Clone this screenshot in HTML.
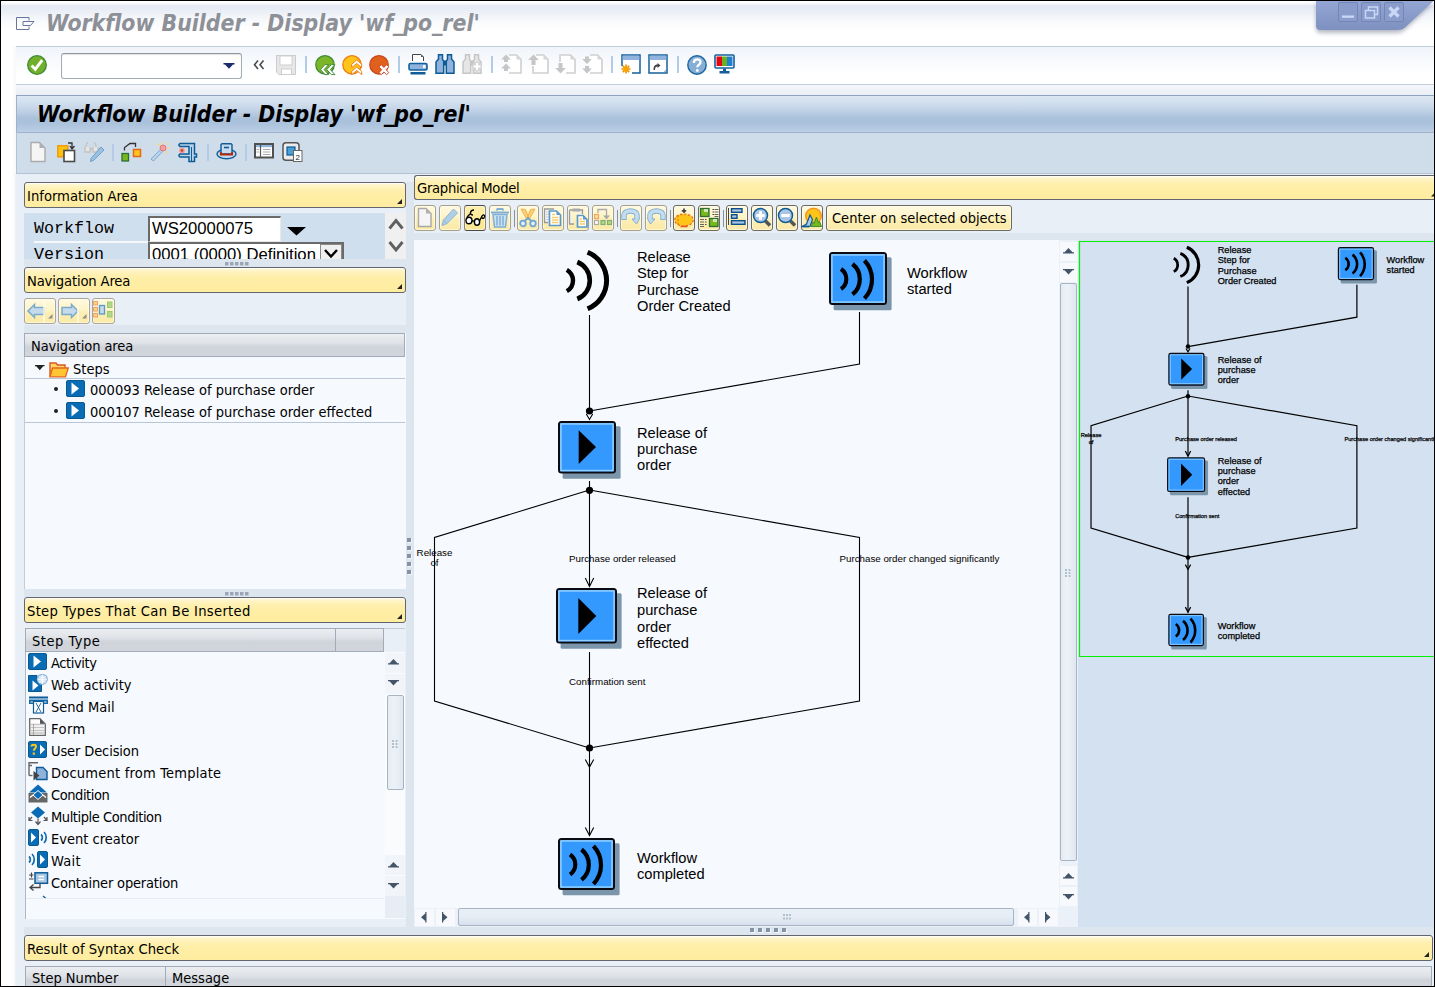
<!DOCTYPE html>
<html lang="en">
<head>
<meta charset="utf-8">
<title>Workflow Builder - Display 'wf_po_rel'</title>
<style>
*{box-sizing:border-box;margin:0;padding:0}
html,body{width:1435px;height:987px;overflow:hidden;background:#000}
body{position:relative;font-family:"DejaVu Sans Condensed","Liberation Sans",sans-serif;font-size:14.5px;color:#000}
.abs{position:absolute}
#win{position:absolute;left:0;top:0;width:1435px;height:987px;background:#e8eff7;overflow:hidden}
#frame{left:0;top:0;width:1435px;height:987px;border:1px solid #000;border-bottom-width:1px;z-index:99}
#win *{position:absolute}
svg{display:block;overflow:visible}
.t{white-space:nowrap;line-height:1}
/* title bar */
#tbar{left:1px;top:1px;width:1433px;height:45px;background:linear-gradient(#fff 0,#fbfcfe 2px,#e3e8f2 5px,#edf1f7 12px,#fafbfd 22px,#fff 30px,#fff 100%)}
#tbar .t{left:45px;top:9px;font:italic bold 22.8px "DejaVu Sans Condensed","Liberation Sans",sans-serif;color:#8d9097}
#leftcol{left:1px;top:46px;width:15px;height:940px;background:linear-gradient(90deg,#fff 0,#fff 70%,#f6f8fc 100%)}
.hline{height:1px;background:#c2cddb}
#stb{left:16px;top:47px;width:1418px;height:37px;background:linear-gradient(#f0f4fa,#f8fafd 40%,#fff 75%)}
#gap1{left:16px;top:85px;width:1418px;height:10px;background:linear-gradient(#f4f7fb,#eaeff6)}
#tpanel{left:16px;top:95px;width:1418px;height:37px;border-top:1px solid #8ea3bd;border-left:1px solid #9fb2c9;background:linear-gradient(#dce7f2 0,#cad9ea 30%,#aac1dc 62%,#abc2dc 75%,#bbcee4 100%)}
#tpanel .t{left:20px;top:5px;font:italic bold 22.8px "DejaVu Sans Condensed","Liberation Sans",sans-serif;color:#000}
#atb{left:16px;top:132px;width:1418px;height:42px;background:#cfdce9;border-left:1px solid #b4c3d4;border-bottom:1px solid #b4c3d4;border-top:1px solid #9fb4cc}
.sep{width:1px;height:17px;background:#a9c0dc}
/* yellow headers */
.dk{background:#dde6ef}
.yh{height:26px;border:1px solid #63666f;border-radius:3px;background:linear-gradient(#fff9e0 0,#fff4c4 3px,#fff0b0 7px,#feeea6 11px,#feec9f 100%);box-shadow:inset 0 1px 0 #fffdf2}
.yh .t{left:2px;top:6px;font-size:14.67px}
.yh i{position:absolute;right:3px;bottom:3px;width:0;height:0;border-left:5px solid transparent;border-bottom:5px solid #222}
.gh{border:1px solid #a2abb8;background:linear-gradient(#eceef1 0,#dfe2e7 40%,#cfd3da 60%,#d2d6dc 100%)}
.gh .t{top:5px}
.btn{height:26px;border:1px solid #a8a08a;border-radius:3px;background:linear-gradient(#fff9e0,#fef4c8 45%,#fcefb6 55%,#fbeaa6);box-shadow:inset 0 0 0 1px rgba(255,255,255,.5)}
</style>
</head>
<body>
<div id="win">
<div id="tbar"><div class="t">Workflow Builder - Display 'wf_po_rel'</div>
<svg style="left:15px;top:15px" width="20" height="16" viewBox="0 0 20 16"><path d="M13 4.5V1.5H0.5V13.500H13V10.500M7 5.500H18L14.500 9.500H7Z" fill="none" stroke="#66759a" stroke-width="1"/></svg>
</div>
<div id="leftcol"></div><div style="left:15px;top:174px;width:1px;height:812px;background:#ecf2f8"></div>
<div class="hline" style="left:16px;top:46px;width:1418px"></div>
<div id="stb"></div>
<div class="hline" style="left:16px;top:84px;width:1418px"></div>
<div id="gap1"></div>
<div id="tpanel"><div class="t">Workflow Builder - Display 'wf_po_rel'</div></div>
<div id="atb"></div>
<!-- standard toolbar -->
<svg style="left:27px;top:55px" width="20" height="20" viewBox="0 0 20 20"><circle cx="10" cy="10" r="9.3" fill="#72b02c" stroke="#3f8c34" stroke-width="1.3"/><path d="M4.600 10.500L8.300 14.200L15.200 5.200" fill="none" stroke="#fff" stroke-width="2.900"/></svg>
<div style="left:61px;top:53px;width:181px;height:26px;background:#fff;border:1px solid #a3abb6;border-top-color:#8f97a2;border-radius:3px;box-shadow:inset 0 1px 1px rgba(0,0,0,.12)"></div>
<svg style="left:223px;top:62px" width="12" height="8" viewBox="0 0 12 8"><path d="M0.500 1H11.500V2.500H10L6 6.700L2 2.500H0.500Z" fill="#1d2b6c"/></svg>
<svg style="left:253px;top:60px" width="12" height="10" viewBox="0 0 12 10"><path d="M5 0.500L1.500 4.700L5 9M10.500 0.500L7 4.700L10.500 9" fill="none" stroke="#444" stroke-width="1.500"/></svg>
<svg style="left:276px;top:55px" width="20" height="20" viewBox="0 0 20 20"><path d="M0.500 0.500H19.500V19.500H3L0.500 17Z" fill="#e7e7e7" stroke="#cbcbcb"/><rect x="4" y="1" width="12" height="9" fill="#fff" stroke="#cfcfcf"/><rect x="5.500" y="14" width="10" height="5.500" fill="#fff" stroke="#cfcfcf"/></svg>
<div class="sep" style="left:305px;top:56px;width:2px;background:#b4cbe8"></div>
<svg style="left:315px;top:55px" width="21" height="20" viewBox="0 0 21 20"><circle cx="10" cy="9.800" r="9.200" fill="#7ab628" stroke="#3f8c34" stroke-width="1.300"/><path d="M10.0 9.6L5.5 14.6L10.0 19.6H13.6L9.1 14.6L13.6 9.6ZM16.3 9.6L11.8 14.6L16.3 19.6H19.900000000000002L15.4 14.6L19.900000000000002 9.6Z" fill="#fff" stroke="#37822e" stroke-width="0.900"/></svg>
<svg style="left:342px;top:55px" width="21" height="20" viewBox="0 0 21 20"><circle cx="10" cy="9.800" r="9.200" fill="#fdc51a" stroke="#ee7d12" stroke-width="1.300"/><path d="M9.7 9.3L14.7 5L19.7 9.3V12.700000000000001L14.7 8.4L9.7 12.700000000000001ZM9.7 16.3L14.7 12L19.7 16.3V19.7L14.7 15.4L9.7 19.7Z" fill="#fff" stroke="#ee7410" stroke-width="0.900"/></svg>
<svg style="left:369px;top:55px" width="21" height="20" viewBox="0 0 21 20"><circle cx="10" cy="9.800" r="9.200" fill="#e0611d" stroke="#c9451c" stroke-width="1.300"/><path d="M10 11.800L12.200 9.700L14.900 12.400L17.600 9.700L19.800 11.800L17.100 14.700L19.800 17.600L17.600 19.700L14.900 17L12.200 19.700L10 17.600L12.700 14.700Z" fill="#fff" stroke="#c7401a" stroke-width="0.900"/></svg>
<div class="sep" style="left:398px;top:56px;width:2px;background:#b4cbe8"></div>
<svg style="left:408px;top:54px" width="20" height="21" viewBox="0 0 20 21"><path d="M4.500 7V0.500H13L15.500 3V7" fill="#fff" stroke="#444" stroke-width="1"/><path d="M13 0.500V3H15.500Z" fill="#555"/><rect x="1" y="9.500" width="18" height="6.500" rx="1.500" fill="#8fb3dc" stroke="#12609e" stroke-width="1.600"/><rect x="15" y="11" width="2.500" height="3" fill="#fff"/><rect x="2.500" y="18" width="15" height="2.500" fill="#0f5d99"/></svg>
<svg style="left:435px;top:54px" width="20" height="20" viewBox="0 0 20 20"><path d="M3.500 0.800H7.500V5.500L8.700 7V19.200H1V8L3.500 5ZM12.500 0.800H16.500V5L19 8V19.200H11.300V7L12.500 5.500Z" fill="#8fb3dc" stroke="#0e5b96" stroke-width="1.500"/><rect x="8.500" y="6.500" width="3" height="5" fill="#0e5b96"/></svg>
<svg style="left:462px;top:54px" width="21" height="20" viewBox="0 0 21 20"><path d="M3.500 0.800H7.500V5.500L8.700 7V19.200H1V8L3.500 5ZM12.500 0.800H16.500V5L19 8V19.200H11.300V7L12.500 5.500Z" fill="#e6e6e6" stroke="#c6c6c6" stroke-width="1.500"/><rect x="8.500" y="6.500" width="3" height="5" fill="#c6c6c6"/><circle cx="15" cy="12.500" r="5" fill="#d4d4d4"/><path d="M15 9V16M11.500 12.500H18.500" stroke="#fff" stroke-width="2.200"/></svg>
<div class="sep" style="left:491px;top:56px;width:2px;background:#b4cbe8"></div>
<svg style="left:501px;top:54px" width="21" height="20" viewBox="0 0 21 20"><path d="M8 1H15.500L20 5.500V19H8" fill="#fff" stroke="#cfcfcf" stroke-width="1.600"/><path d="M15.500 1V5.500H20Z" fill="#d6d6d6"/><path d="M5 0.500L9.800 5.500H7V8H3V5.500H0.200ZM5 9.500L9.800 14.500H7V17H3V14.500H0.200Z" fill="#c6c6c6"/></svg>
<svg style="left:528px;top:54px" width="21" height="20" viewBox="0 0 21 20"><path d="M8 1H15.500L20 5.500V19H5V12" fill="#fff" stroke="#cfcfcf" stroke-width="1.600"/><path d="M15.500 1V5.500H20Z" fill="#d6d6d6"/><path d="M5.500 0.500L10.800 6H7.500V11H3.500V6H0.200Z" fill="#c6c6c6"/></svg>
<svg style="left:555px;top:54px" width="21" height="20" viewBox="0 0 21 20"><path d="M5 8V1H15.500L20 5.500V19H11" fill="#fff" stroke="#cfcfcf" stroke-width="1.600"/><path d="M15.500 1V5.500H20Z" fill="#d6d6d6"/><path d="M5.500 19.500L10.800 14H7.500V9H3.500V14H0.200Z" fill="#c6c6c6"/></svg>
<svg style="left:582px;top:54px" width="21" height="20" viewBox="0 0 21 20"><path d="M8 1H15.500L20 5.500V19H8" fill="#fff" stroke="#cfcfcf" stroke-width="1.600"/><path d="M15.500 1V5.500H20Z" fill="#d6d6d6"/><path d="M5 10L9.800 5H7V2.500H3V5H0.200ZM5 19.500L9.800 14.500H7V12H3V14.500H0.200Z" fill="#c6c6c6"/></svg>
<div class="sep" style="left:611px;top:56px;width:2px;background:#b4cbe8"></div>
<svg style="left:621px;top:54px" width="20" height="20" viewBox="0 0 20 20"><path d="M1 12V1H19V19H11" fill="#fff" stroke="#155f9c" stroke-width="1.500"/><rect x="1.700" y="1.700" width="16.600" height="4.300" fill="#8fb3dc"/><path d="M5 10.500V19.500M0.500 15H9.500M1.800 11.800L8.200 18.200M8.200 11.800L1.800 18.200" stroke="#f39200" stroke-width="1.700"/><circle cx="5" cy="15" r="2.600" fill="#f7a600"/></svg>
<svg style="left:648px;top:54px" width="20" height="20" viewBox="0 0 20 20"><rect x="1" y="1" width="18" height="18" fill="#fff" stroke="#155f9c" stroke-width="1.500"/><rect x="1.700" y="1.700" width="16.600" height="4.300" fill="#8fb3dc"/><path d="M5.500 16C5.500 12 7 10.500 9.500 10.500V9L12.500 11.500L9.500 14V12.500C7.800 12.500 7 13.500 7 16Z" fill="#444"/><path d="M16 17.500H17.500V16" stroke="#8fb3dc" fill="none"/></svg>
<div class="sep" style="left:677px;top:56px;width:2px;background:#b4cbe8"></div>
<svg style="left:687px;top:55px" width="20" height="20" viewBox="0 0 20 20"><circle cx="10" cy="10" r="9.200" fill="#86aed6" stroke="#1b669f" stroke-width="1.400"/><path d="M6.800 8C6.800 5.500 8.200 4.300 10.200 4.300C12.200 4.300 13.500 5.500 13.500 7.200C13.500 9.500 10.300 9.800 10.300 12.300" fill="none" stroke="#fff" stroke-width="2.300"/><circle cx="10.300" cy="15.500" r="1.400" fill="#fff"/></svg>
<svg style="left:714px;top:54px" width="21" height="20" viewBox="0 0 21 20"><rect x="1" y="1" width="19" height="13" rx="1" fill="#fff" stroke="#155f9c" stroke-width="1.600"/><rect x="2.500" y="2.500" width="5.500" height="9.500" fill="#e30613"/><rect x="8" y="2.500" width="5" height="9.500" fill="#6ab023"/><rect x="13" y="2.500" width="5.500" height="9.500" fill="#1f7fd0"/><path d="M9 14.500H12V17H15.500V19.500H5.500V17H9Z" fill="#155f9c"/></svg>
<!-- application toolbar -->
<svg style="left:30px;top:142px" width="16" height="20" viewBox="0 0 16 20"><path d="M1 0.500H9.500L15 6V19.500H1Z" fill="#f5f5f5" stroke="#ababab" stroke-width="1.400"/><path d="M9.500 0.500V6H15Z" fill="#b0b0b0"/></svg>
<svg style="left:57px;top:142px" width="20" height="20" viewBox="0 0 20 20"><rect x="0.800" y="3.800" width="10" height="11" fill="#fdc211" stroke="#f39a00" stroke-width="1.400"/><rect x="7" y="8.500" width="10.500" height="11" fill="#fff" stroke="#4a4a4a" stroke-width="1.600"/><path d="M11 1H15V6M13 4L15 7L17.500 4" fill="none" stroke="#333" stroke-width="1.300"/></svg>
<svg style="left:84px;top:142px" width="21" height="20" viewBox="0 0 21 20"><path d="M1 5V10H6V5M9 5V10H14V5M6 7H9M2 5C2 2 3 1 4 1M12 5C12 2 11 1 10 1" fill="#e6e6e6" stroke="#c2c2c2" stroke-width="1.300"/><path d="M17 5L20 8L9.500 18.500L6.500 19.500L7 16.500Z" fill="#9cc0e0" stroke="#6da0cc" stroke-width="1"/></svg>
<div class="sep" style="left:112px;top:144px;width:2px;background:#b4cbe8"></div>
<svg style="left:121px;top:142px" width="21" height="20" viewBox="0 0 21 20"><path d="M3.500 8.500V5.500L9 1.500H14.500V5" fill="none" stroke="#333" stroke-width="1.300"/><rect x="1" y="11.500" width="6.500" height="7.500" fill="#79b81d" stroke="#2c6e35" stroke-width="1.300"/><rect x="12.500" y="7.500" width="7" height="7" fill="#fdc51a" stroke="#e5671c" stroke-width="1.500"/></svg>
<svg style="left:150px;top:142px" width="21" height="20" viewBox="0 0 21 20"><path d="M10.500 7.500L12.500 9.500L3.500 19L1 17Z" fill="#b9d3ea" stroke="#7fa9d0" stroke-width="1"/><circle cx="13" cy="6" r="3" fill="#f2a0a0" stroke="#e06a6a" stroke-width="0.800"/><path d="M7 2.500H11M17 2.500L19 1M17.500 6H20.500M16 9V12M12 0.500H14" stroke="#fbd58a" stroke-width="1.500"/></svg>
<svg style="left:178px;top:142px" width="20" height="20" viewBox="0 0 20 20"><path d="M2 1.500H16.500V12H18.500V15H16.500V19.500H11V15H2L1 14V13L2 12H11V4.500H2L1 3.500V2.500Z" fill="#b9d3ea" stroke="#0e5b96" stroke-width="1.500"/><path d="M13.500 5V19" stroke="#0e5b96" stroke-width="1"/><circle cx="4" cy="8.500" r="2.800" fill="#f29a9a"/><circle cx="4" cy="8.500" r="1.300" fill="#c8421a"/></svg>
<div class="sep" style="left:207px;top:144px;width:2px;background:#b4cbe8"></div>
<svg style="left:216px;top:143px" width="21" height="17" viewBox="0 0 21 17"><ellipse cx="10.500" cy="11" rx="9.500" ry="4.800" fill="#c6dbf0" stroke="#0e5b96" stroke-width="1.400"/><path d="M5 11V1.500L6 0.800H15L16 1.500V11Z" fill="#c6dbf0" stroke="#0e5b96" stroke-width="1.400"/><path d="M4.800 9V11.500H16.200V9" fill="none" stroke="#b32a0e" stroke-width="1.800"/><path d="M8 4.500H13" stroke="#0e5b96" stroke-width="1.600"/></svg>
<div class="sep" style="left:245px;top:144px;width:2px;background:#b4cbe8"></div>
<svg style="left:254px;top:143px" width="20" height="16" viewBox="0 0 20 16"><rect x="1" y="1" width="18" height="13.500" fill="#fff" stroke="#505050" stroke-width="2"/><rect x="2" y="2" width="16" height="2.200" fill="#8fb3dc"/><path d="M6.500 1.500V14.500" stroke="#555" stroke-width="1.200"/><path d="M2.500 6.500H5M2.500 9H5M9 6.500H16.500M9 9H16.500M9 11.500H16.500" stroke="#aaa" stroke-width="1.200"/></svg>
<svg style="left:282px;top:142px" width="21" height="20" viewBox="0 0 21 20"><rect x="1" y="0.800" width="16" height="17.500" rx="3" fill="#ececec" stroke="#555" stroke-width="1.500"/><rect x="5" y="5" width="8" height="8" fill="#4b9fd4" stroke="#0e5b96" stroke-width="1.200"/><rect x="11.500" y="8.500" width="8.500" height="11" fill="#fff" stroke="#666" stroke-width="1"/><text x="15.800" y="17.500" font-size="8" text-anchor="middle" font-family="'Liberation Sans',sans-serif" fill="#222">2</text></svg>
<!-- left column -->
<div class="dk" style="left:24px;top:259px;width:382px;height:8px"></div><div class="dk" style="left:24px;top:325px;width:382px;height:8px"></div><div class="dk" style="left:24px;top:589px;width:382px;height:8px"></div><div class="dk" style="left:406px;top:182px;width:8px;height:746px"></div><div class="dk" style="left:414px;top:233px;width:1020px;height:7px"></div><div class="dk" style="left:24px;top:927px;width:1410px;height:8px"></div>
<div class="yh" style="left:24px;top:182px;width:382px"><div class="t">Information Area</div><i></i></div>
<div id="info" style="left:24px;top:213px;width:361px;height:46px;background:#d0dfee;overflow:hidden">
 <div class="t" style="left:10px;top:6px;font:16.67px 'Liberation Mono',monospace">Workflow</div>
 <div style="left:10px;top:28px;width:114px;height:2px;background:#f4f8fc"></div>
 <div style="left:124px;top:3px;width:133px;height:26px;background:#fff;border-top:2px solid #6a6a6a;border-left:2px solid #6a6a6a;border-right:1px solid #e8e8e8;border-bottom:1px solid #e8e8e8"></div>
 <div class="t" style="left:128px;top:6px;font:16.67px 'Liberation Sans',sans-serif">WS20000075</div>
 <svg style="left:263px;top:14px" width="19" height="9" viewBox="0 0 19 9"><path d="M0 0H19L9.500 8.500Z" fill="#000"/></svg>
 <div class="t" style="left:10px;top:32px;font:16.67px 'Liberation Mono',monospace">Version</div>
 <div style="left:124px;top:29px;width:196px;height:25px;background:#fff;border-top:2px solid #6a6a6a;border-left:2px solid #6a6a6a;border-right:2px solid #6a6a6a"></div>
 <div class="t" style="left:128px;top:32px;font:16.67px 'Liberation Sans',sans-serif">0001 (0000) Definition</div>
 <div style="left:296px;top:31px;width:22px;height:20px;background:#f0f0f0;border:1px solid #8a8a8a"></div>
 <svg style="left:300px;top:36px" width="14" height="9" viewBox="0 0 14 9"><path d="M1 1L7 7.500L13 1" fill="none" stroke="#000" stroke-width="2.400"/></svg>
</div>
<div style="left:385px;top:213px;width:21px;height:46px;background:#f0f0f0"></div>
<svg style="left:388px;top:218px" width="16" height="35" viewBox="0 0 16 35"><path d="M1.500 10.500L8 2.500L14.500 10.500M1.500 24L8 32L14.500 24" fill="none" stroke="#606060" stroke-width="2.900"/></svg>
<svg style="left:225px;top:262px" width="24" height="4" viewBox="0 0 24 4"><path d="M0 0h3.500v3.500h-3.500zM5 0h3.500v3.500h-3.500zM10 0h3.500v3.500h-3.500zM15 0h3.500v3.500h-3.500zM20 0h3.500v3.500h-3.500z" fill="#9aa6b6"/></svg>
<div class="yh" style="left:24px;top:267px;width:382px"><div class="t" style="letter-spacing:-0.16px">Navigation Area</div><i></i></div>
<div class="btn" style="left:24px;top:298px;width:32px;border-color:#aaa595"></div>
<div class="btn" style="left:58px;top:298px;width:32px;border-color:#aaa595"></div>
<div class="btn" style="left:92px;top:298px;width:23px;border-color:#aaa595"></div>
<svg style="left:24px;top:298px" width="92" height="26" viewBox="0 0 92 26"><path d="M4 13L10.500 6.500V9.500H20V16.500H10.500V19.500Z" fill="#c5daea" stroke="#7aaacc" stroke-width="1.500"/><path d="M20 1.500V24.500" stroke="#fffbe8" stroke-width="1.500"/><path d="M24 20.500L28.500 16V20.500Z" fill="#8e8e8e"/>
<path d="M54 13L47.500 6.500V9.500H38V16.500H47.500V19.500Z" fill="#c5daea" stroke="#7aaacc" stroke-width="1.500"/><path d="M54 1.500V24.500" stroke="#fffbe8" stroke-width="1.500"/><path d="M58 20.500L62.500 16V20.500Z" fill="#8e8e8e"/>
<rect x="69.500" y="3.500" width="4" height="3.500" fill="#fbd870" stroke="#f0a078"/><rect x="69.500" y="9.500" width="4" height="3.500" fill="#fbd870" stroke="#f0a078"/><rect x="69.500" y="15.500" width="4" height="3.500" fill="#fbd870" stroke="#f0a078"/><rect x="75.500" y="7.500" width="5" height="8.500" fill="#c5daea" stroke="#5b9ac8" stroke-width="1.300"/><rect x="83.500" y="4" width="4.500" height="5.500" fill="#b6d78a" stroke="#9cc870"/><rect x="83.500" y="13.500" width="4.500" height="5.500" fill="#b6d78a" stroke="#9cc870"/></svg>
<!-- nav tree -->
<div style="left:24px;top:333px;width:382px;height:256px;background:#f6f9fd;border-left:1px solid #c3ccd8"></div>
<div class="gh" style="left:24px;top:333px;width:381px;height:24px"><div class="t" style="left:6px;top:5px;letter-spacing:-0.10px">Navigation area</div></div>
<div class="hline" style="left:25px;top:378px;width:380px;background:#b9c6d6"></div>
<div class="hline" style="left:25px;top:422px;width:380px;background:#b9c6d6"></div>
<svg style="left:35px;top:365px" width="10" height="6" viewBox="0 0 10 6"><path d="M0 0H9.500V1.300H8.200L4.750 5.200L1.300 1.300H0Z" fill="#222"/></svg>
<svg style="left:49px;top:362px" width="20" height="16" viewBox="0 0 20 16"><path d="M1 14.500V1H7L8.500 3H16V6" fill="#fdd36a" stroke="#d95820" stroke-width="1.400"/><path d="M1 14.800L3.500 6H19.300L16.500 14.800Z" fill="#fdc632" stroke="#e5671c" stroke-width="1.300"/></svg>
<div class="t" style="left:73px;top:362px">Steps</div>
<div style="left:54px;top:387px;width:4px;height:4px;border-radius:2px;background:#222"></div>
<svg style="left:66px;top:380px" width="19" height="17" viewBox="0 0 19 17"><rect x="0.500" y="0.500" width="18" height="16" rx="1.500" fill="#0a6cb4" stroke="#08598f"/><path d="M5.500 2.500L13 8.500L5.500 14.500Z" fill="#fff"/></svg>
<div class="t" style="left:90px;top:383px">000093 Release of purchase order</div>
<div style="left:54px;top:409px;width:4px;height:4px;border-radius:2px;background:#222"></div>
<svg style="left:66px;top:402px" width="19" height="17" viewBox="0 0 19 17"><rect x="0.500" y="0.500" width="18" height="16" rx="1.500" fill="#0a6cb4" stroke="#08598f"/><path d="M5.500 2.500L13 8.500L5.500 14.500Z" fill="#fff"/></svg>
<div class="t" style="left:90px;top:405px">000107 Release of purchase order effected</div>
<svg style="left:225px;top:592px" width="24" height="4" viewBox="0 0 24 4"><path d="M0 0h3.500v3.500h-3.500zM5 0h3.500v3.500h-3.500zM10 0h3.500v3.500h-3.500zM15 0h3.500v3.500h-3.500zM20 0h3.500v3.500h-3.500z" fill="#9aa6b6"/></svg>
<div class="yh" style="left:24px;top:597px;width:382px"><div class="t" style="letter-spacing:0.29px">Step Types That Can Be Inserted</div><i></i></div>
<!-- step types -->
<div style="left:25px;top:628px;width:359px;height:291px;background:#f6f9fd;border-left:1px solid #aeb8c6"></div>
<div style="left:384px;top:652px;width:21px;height:267px;background:#f6f9fd"></div>
<div class="gh" style="left:25px;top:628px;width:311px;height:24px"><div class="t" style="left:6px;top:5px;letter-spacing:0.52px">Step Type</div></div>
<div class="gh" style="left:335px;top:628px;width:49px;height:24px"></div>
<div style="left:384px;top:628px;width:21px;height:1px;background:#c2cad6"></div>
<div id="stl" style="left:26px;top:652px;width:358px;height:246px;overflow:hidden">
<div class="t" style="left:25px;top:4px;letter-spacing:-0.39px">Activity</div>
<div class="t" style="left:25px;top:26px">Web activity</div>
<div class="t" style="left:25px;top:48px">Send Mail</div>
<div class="t" style="left:25px;top:70px;letter-spacing:0.50px">Form</div>
<div class="t" style="left:25px;top:92px;letter-spacing:-0.12px">User Decision</div>
<div class="t" style="left:25px;top:114px;letter-spacing:0.22px">Document from Template</div>
<div class="t" style="left:25px;top:136px;letter-spacing:-0.44px">Condition</div>
<div class="t" style="left:25px;top:158px;letter-spacing:-0.43px">Multiple Condition</div>
<div class="t" style="left:25px;top:180px">Event creator</div>
<div class="t" style="left:25px;top:202px;letter-spacing:0.27px">Wait</div>
<div class="t" style="left:25px;top:224px;letter-spacing:-0.18px">Container operation</div>
<!-- icons -->
<svg style="left:2px;top:1px" width="19" height="17" viewBox="0 0 19 17"><rect x="0.500" y="0.500" width="18" height="16" rx="1.500" fill="#0a6cb4" stroke="#08598f"/><path d="M5.500 2.500L13 8.500L5.500 14.500Z" fill="#fff"/></svg>
<svg style="left:2px;top:22px" width="20" height="18" viewBox="0 0 20 18"><path d="M0.500 1.500H9V8H13.500V17.500H0.500Z" fill="#0a6cb4" stroke="#08598f"/><path d="M4.500 6.500L10.500 11.500L4.500 16.500Z" fill="#fff"/><circle cx="14.300" cy="5.300" r="5" fill="#cfe0f1" stroke="#8fb3dc" stroke-width="1.200"/><path d="M9.500 5.300H19M14.300 0.500V10M11 2.500C13 4 16 4 17.500 2.500M11 8C13 6.500 16 6.500 17.500 8" stroke="#fff" stroke-width="0.900" fill="none"/></svg>
<svg style="left:3px;top:44px" width="19" height="18" viewBox="0 0 19 18"><rect x="0" y="0.500" width="19" height="2" fill="#0e5b96"/><rect x="0" y="3.500" width="19" height="4.500" fill="#0a6cb4"/><rect x="1.500" y="5" width="2.500" height="2" fill="#9aa"/><rect x="15" y="5" width="2.500" height="2" fill="#9aa"/><rect x="4.500" y="5.500" width="10" height="11.500" fill="#fff" stroke="#0e5b96" stroke-width="1.200"/><path d="M7 7L12 16M12 7L7 16" stroke="#0e5b96" stroke-width="0.900" fill="none"/></svg>
<svg style="left:3px;top:66px" width="17" height="18" viewBox="0 0 17 18"><path d="M0.700 0.700H11L16.300 6V17.300H0.700Z" fill="#fff" stroke="#666" stroke-width="1.300"/><path d="M11 0.700V6H16.300Z" fill="#555"/><path d="M1 6.500H16M1 9.500H16M1 12.500H16M1 15H16" stroke="#c4c4c4" stroke-width="1.400"/><path d="M4.500 6V17" stroke="#999" stroke-width="0.800"/></svg>
<svg style="left:2px;top:89px" width="19" height="17" viewBox="0 0 19 17"><rect x="0.500" y="0.500" width="18" height="16" rx="1.500" fill="#0a6cb4" stroke="#08598f"/><path d="M12 3.500L17 8.500L12 13.500Z" fill="#fff"/><path d="M3.500 5.500C3.500 3 8 3 8 5.500C8 7.500 5.800 7.500 5.800 9.800" fill="none" stroke="#fdc51a" stroke-width="2"/><rect x="4.700" y="11.500" width="2.200" height="2.200" fill="#fdc51a"/></svg>
<svg style="left:2px;top:110px" width="20" height="19" viewBox="0 0 20 19"><path d="M1 13.500V0.700H10M1 3.500H4" fill="none" stroke="#666" stroke-width="1.400"/><path d="M1 13.500H4.500" stroke="#666" stroke-width="1.400"/><path d="M8.500 5.500H15L19 9.500V17.500H8.500Z" fill="#8fb3dc" stroke="#0e5b96" stroke-width="1.400"/><path d="M5.500 9L11.500 13.500L5.500 18.500Z" fill="#444"/></svg>
<svg style="left:2px;top:132px" width="20" height="19" viewBox="0 0 20 19"><path d="M10 0.500L19 8.500H1Z" fill="#0a6cb4"/><path d="M0.500 9H19.500V18.500H0.500Z" fill="#666"/><path d="M10 6.500L15 11L10 15.500L5 11Z" fill="#0a6cb4" stroke="#fff" stroke-width="1"/><path d="M2 13.500L5 11M18 13.500L15 11" stroke="#fff" stroke-width="1.300"/></svg>
<svg style="left:2px;top:154px" width="20" height="19" viewBox="0 0 20 19"><path d="M10 0.500L17 6.500L10 12.500L3 6.500Z" fill="#0a6cb4"/><path d="M10 12.500V18M7.500 15.500L10 18.500L12.500 15.500M4 11L1 14.500M1 11V14.500H4.500M16 11L19 14.500M19 11V14.500H15.500" fill="none" stroke="#555" stroke-width="1.200"/></svg>
<svg style="left:2px;top:177px" width="21" height="17" viewBox="0 0 21 17"><rect x="0.500" y="0.500" width="10" height="16" rx="1.500" fill="#0a6cb4" stroke="#08598f"/><path d="M3 3.500L8 8.500L3 13.500Z" fill="#fff"/><path d="M13 5.500C14.800 7 14.800 10 13 11.500M16 3C19 6 19 11 16 14" fill="none" stroke="#0e6ab0" stroke-width="1.700"/></svg>
<svg style="left:2px;top:199px" width="21" height="17" viewBox="0 0 21 17"><rect x="9.500" y="0.500" width="10" height="16" rx="1.500" fill="#0a6cb4" stroke="#08598f"/><path d="M12 3.500L17 8.500L12 13.500Z" fill="#fff"/><path d="M1 5.500C2.800 7 2.800 10 1 11.500M4 3C7 6 7 11 4 14" fill="none" stroke="#0e6ab0" stroke-width="1.700"/></svg>
<svg style="left:2px;top:220px" width="21" height="20" viewBox="0 0 21 20"><rect x="7" y="0.800" width="12.500" height="10.500" fill="#a9c6e4" stroke="#0e5b96" stroke-width="1.500"/><path d="M10.500 4.500H16M10.500 7.500H16" stroke="#fff" stroke-width="1.500"/><path d="M1 3H5.500M3.500 0.500V5.500M1 7H5.500" stroke="#444" stroke-width="1.200"/><path d="M12 11.500V15.500H3M5.500 12.500L2 15.500L5.500 18.500" fill="none" stroke="#444" stroke-width="1.300"/></svg>
<svg style="left:17px;top:244px" width="4" height="3" viewBox="0 0 4 3"><path d="M0 0L3 2.500" stroke="#0e5b96" stroke-width="1.300"/></svg>
</div>
<!-- scrollbar of step list -->
<div style="left:385px;top:652px;width:20px;height:244px;background:#fafbfd"></div><div style="left:385px;top:896px;width:20px;height:22px;background:#e6edf5"></div>
<div style="left:385px;top:653px;width:20px;height:20px;background:#f1f4f9"></div>
<div style="left:385px;top:674px;width:20px;height:20px;background:#f1f4f9"></div>
<svg style="left:388px;top:659px" width="12" height="6" viewBox="0 0 12 6"><path d="M0 5.500H11V4.300H9.500L5.500 0L1.500 4.300H0Z" fill="#44556a"/></svg>
<svg style="left:388px;top:680px" width="12" height="6" viewBox="0 0 12 6"><path d="M0 0H11V1.200H9.500L5.500 5.500L1.500 1.200H0Z" fill="#44556a"/></svg>
<div style="left:387px;top:695px;width:17px;height:95px;border:1px solid #a9b4c2;border-radius:2px;background:linear-gradient(90deg,#e4ebf3,#edf2f8 40%,#dfe7f0)"></div>
<svg style="left:392px;top:740px" width="6" height="8" viewBox="0 0 6 8"><path d="M0 0h2v2h-2zM3.500 0h2v2h-2zM0 3h2v2h-2zM3.500 3h2v2h-2zM0 6h2v2h-2zM3.500 6h2v2h-2z" fill="#b4bfcc"/></svg>
<div style="left:385px;top:855px;width:20px;height:20px;background:#f1f4f9"></div>
<div style="left:385px;top:876px;width:20px;height:20px;background:#f1f4f9"></div>
<svg style="left:388px;top:862px" width="12" height="6" viewBox="0 0 12 6"><path d="M0 5.500H11V4.300H9.500L5.500 0L1.500 4.300H0Z" fill="#44556a"/></svg>
<svg style="left:388px;top:883px" width="12" height="6" viewBox="0 0 12 6"><path d="M0 0H11V1.200H9.500L5.500 5.500L1.500 1.200H0Z" fill="#44556a"/></svg>
<div style="left:26px;top:898px;width:358px;height:1px;background:#e6ebf2"></div>
<!-- bottom -->
<div class="yh" style="left:24px;top:935px;width:1409px"><div class="t">Result of Syntax Check</div><i></i></div>
<div class="gh" style="left:25px;top:966px;width:141px;height:24px"><div class="t" style="left:6px;top:4px">Step Number</div></div>
<div class="gh" style="left:165px;top:966px;width:1267px;height:24px"><div class="t" style="left:6px;top:4px">Message</div></div>
<!-- graph area -->
<div class="yh" style="left:414px;top:175px;width:1022px;height:25px;border-right:0;border-radius:3px 0 0 3px"><div class="t" style="top:5px;letter-spacing:-0.3px">Graphical Model</div></div>
<svg style="left:1431px;top:191px" width="6" height="6" viewBox="0 0 6 6"><path d="M0 5.500L5 0.500V5.500Z" fill="#222"/></svg>
<div class="btn" style="left:414px;top:205px;width:22px;border-color:#a8a18a"></div>
<svg style="left:414px;top:205px" width="22" height="26" viewBox="0 0 22 26"><path d="M4.500 3.500H12L17 8.500V21.500H4.500Z" fill="#f5f5f5" stroke="#a8a8a8" stroke-width="1.400"/><path d="M12 3.500V8.500H17Z" fill="#b0b0b0"/></svg>
<div class="btn" style="left:439px;top:205px;width:22px;border-color:#a8a18a"></div>
<svg style="left:439px;top:205px" width="22" height="26" viewBox="0 0 22 26"><path d="M14.500 4L18.500 8L8 18.500L3 20.500L4.500 15Z" fill="#b0cfe6" stroke="#8ab6d8" stroke-width="1"/><path d="M4.500 15L8 18.500" stroke="#8ab6d8"/></svg>
<div class="btn" style="left:464px;top:205px;width:22px;border-color:#6e6a5c;background:linear-gradient(#fdeea8,#fbe690);border-color:#4a4a4a #8a8470"></div>
<svg style="left:464px;top:205px" width="22" height="26" viewBox="0 0 22 26"><path d="M10 5C6 5 5 10 9 10M7 8L3 12M15 17L18 11C19 9 22 10 20 13C19 14 17 13 18 11" fill="none" stroke="#000" stroke-width="1.300"/><ellipse cx="5" cy="15.500" rx="3" ry="3.300" fill="#fff" stroke="#000" stroke-width="1.400"/><ellipse cx="13" cy="17" rx="2.600" ry="3.300" fill="#fff" stroke="#000" stroke-width="1.400"/><path d="M8 16H10.500" stroke="#000" stroke-width="1.300"/></svg>
<div class="btn" style="left:489px;top:205px;width:22px;border-color:#a8a18a"></div>
<svg style="left:489px;top:205px" width="22" height="26" viewBox="0 0 22 26"><path d="M2 7.500H20M7.500 5.500L8.500 4H13.500L14.500 5.500" fill="none" stroke="#7fb0d6" stroke-width="2"/><path d="M4 9.500H18L16.500 22H5.500Z" fill="#cfe1f0" stroke="#7fb0d6" stroke-width="1.500"/><path d="M8 11V20.500M11 11V20.500M14 11V20.500" stroke="#7fb0d6" stroke-width="1.500"/></svg>
<div class="btn" style="left:517px;top:205px;width:22px;border-color:#a8a18a"></div>
<svg style="left:517px;top:205px" width="22" height="26" viewBox="0 0 22 26"><path d="M4 4L8.500 4.500L12 13.500L10 14.500ZM18 4L13.500 4.500L10 13.500L12 14.500Z" fill="#fbd27a" stroke="#f3b040" stroke-width="1"/><circle cx="6" cy="18.500" r="2.800" fill="#e4eef7" stroke="#6fa6d2" stroke-width="1.800"/><circle cx="16" cy="18.500" r="2.800" fill="#e4eef7" stroke="#6fa6d2" stroke-width="1.800"/><path d="M7.500 16L11 13L14.500 16" fill="none" stroke="#6fa6d2" stroke-width="1.800"/></svg>
<div class="btn" style="left:542px;top:205px;width:22px;border-color:#a8a18a"></div>
<svg style="left:542px;top:205px" width="22" height="26" viewBox="0 0 22 26"><path d="M12 4H2.500V17.500H6" fill="#f4f4f4" stroke="#999" stroke-width="1.300"/><path d="M4 7H7M4 9.500H7M4 12H7M4 14.500H7" stroke="#ccc"/><path d="M7.500 6H14.500L18.500 10V20.500H7.500Z" fill="#fff" stroke="#5b9ac8" stroke-width="1.700"/><path d="M14.500 6V10H18.500Z" fill="#5b9ac8"/><path d="M10 9.500H13M10 12.500H16.500M10 15H16.500M10 17.500H16.500" stroke="#f6cd6a" stroke-width="1.300"/></svg>
<div class="btn" style="left:567px;top:205px;width:22px;border-color:#a8a18a"></div>
<svg style="left:567px;top:205px" width="22" height="26" viewBox="0 0 22 26"><path d="M2.500 5H15.500V9M2.500 5V19H7" fill="#f0f0f0" stroke="#999" stroke-width="1.300"/><rect x="5.500" y="3.500" width="7.500" height="3" fill="#aaa"/><path d="M10.500 10.500H16L20 14.500V22H10.500Z" fill="#fff" stroke="#5b9ac8" stroke-width="1.700"/><path d="M16 10.500V14.500H20Z" fill="#5b9ac8"/><path d="M12.500 14H15M12.500 16.500H18M12.500 19H18" stroke="#f6cd6a" stroke-width="1.400"/></svg>
<div class="btn" style="left:592px;top:205px;width:22px;border-color:#a8a18a"></div>
<svg style="left:592px;top:205px" width="22" height="26" viewBox="0 0 22 26"><path d="M6 8V4.500H14.500V11" fill="none" stroke="#aaa" stroke-width="1.300"/><path d="M11 10.500H18L14.500 14.500Z" fill="#aaa"/><rect x="2.500" y="9.500" width="4" height="4" fill="#fbe0a0" stroke="#f2a65a" stroke-width="1.200"/><rect x="2.500" y="15.500" width="4" height="4" fill="#fff" stroke="#aaa" stroke-width="1.200"/><rect x="9" y="15.500" width="4" height="4" fill="#b8d878" stroke="#7fae7a" stroke-width="1.200"/><rect x="15.500" y="15.500" width="4" height="4" fill="#b8d878" stroke="#7fae7a" stroke-width="1.200"/></svg>
<div class="btn" style="left:620px;top:205px;width:22px;border-color:#a8a18a"></div>
<svg style="left:620px;top:205px" width="22" height="26" viewBox="0 0 22 26"><path d="M4 14V10.500C4 4.500 17 4.500 17 10.500V14" fill="none" stroke="#7fb0d6" stroke-width="5.400"/><path d="M12 14L16.500 19L19.500 13.500Z" fill="#c5dcee" stroke="#7fb0d6" stroke-width="1"/><path d="M4 14V10.500C4 4.500 17 4.500 17 10.500V14.500" fill="none" stroke="#c5dcee" stroke-width="3.600"/><path d="M1.300 14.500H6.700" stroke="#7fb0d6" stroke-width="1"/></svg>
<div class="btn" style="left:645px;top:205px;width:22px;border-color:#a8a18a"></div>
<svg style="left:645px;top:205px" width="22" height="26" viewBox="0 0 22 26"><path d="M18 14V10.500C18 4.500 5 4.500 5 10.500V14" fill="none" stroke="#7fb0d6" stroke-width="5.400"/><path d="M10 14L5.500 19L2.500 13.500Z" fill="#c5dcee" stroke="#7fb0d6" stroke-width="1"/><path d="M18 14V10.500C18 4.500 5 4.500 5 10.500V14.500" fill="none" stroke="#c5dcee" stroke-width="3.600"/><path d="M15.300 14.500H20.700" stroke="#7fb0d6" stroke-width="1"/></svg>
<div class="btn" style="left:673px;top:205px;width:22px;border-color:#6e6a5c"></div>
<svg style="left:673px;top:205px" width="22" height="26" viewBox="0 0 22 26"><path d="M11 3.500V8M8.800 5.800H13.200" stroke="#444" stroke-width="1.700"/><ellipse cx="11" cy="15" rx="9.300" ry="6" fill="#fdc51a" stroke="#ee6a10" stroke-width="1.200" stroke-dasharray="2.500 1.500"/><path d="M5 10.500V19.500" stroke="#ee6a10" stroke-dasharray="2 1.500"/><path d="M7.500 21.500H14.500" stroke="#e5571c" stroke-width="1.500"/></svg>
<div class="btn" style="left:698px;top:205px;width:22px;border-color:#6e6a5c"></div>
<svg style="left:698px;top:205px" width="22" height="26" viewBox="0 0 22 26"><rect x="2.500" y="3.500" width="8.500" height="8" fill="#79b81d" stroke="#2c6e35" stroke-width="1.300"/><rect x="6" y="4" width="4" height="3" fill="#cfe6b4"/><rect x="11.500" y="13.500" width="8.500" height="8" fill="#79b81d" stroke="#2c6e35" stroke-width="1.300"/><rect x="15" y="14" width="4" height="3" fill="#cfe6b4"/><path d="M14.500 4.500H16M14.500 7H16M14.500 9.500H16" stroke="#444" stroke-width="1.200"/><path d="M16.500 4.500H20.500M16.500 7H20.500M16.500 9.500H20.500M16.500 11.500H20.500" stroke="#666" stroke-width="1.200"/><path d="M7 14.500H8.500M7 17H8.500M7 19.500H8.500" stroke="#444" stroke-width="1.200"/><path d="M2 14.500H6M2 17H6M2 19.500H6M2 21.500H6" stroke="#666" stroke-width="1.200"/></svg>
<div class="btn" style="left:726px;top:205px;width:22px;border-color:#6e6a5c"></div>
<svg style="left:726px;top:205px" width="22" height="26" viewBox="0 0 22 26"><path d="M2.500 3V20" stroke="#444" stroke-width="1"/><rect x="5.500" y="3.700" width="10.500" height="3.600" fill="#a9c6e4" stroke="#0e4f8a" stroke-width="1.400"/><rect x="5.500" y="9.700" width="5.500" height="3.600" fill="#a9c6e4" stroke="#0e4f8a" stroke-width="1.400"/><rect x="5.500" y="15.700" width="13.500" height="3.600" fill="#a9c6e4" stroke="#0e4f8a" stroke-width="1.400"/></svg>
<div class="btn" style="left:751px;top:205px;width:22px;border-color:#6e6a5c"></div>
<svg style="left:751px;top:205px" width="22" height="26" viewBox="0 0 22 26"><path d="M14.500 16L19 20.500" stroke="#555" stroke-width="3.600"/><circle cx="9.500" cy="10.500" r="7" fill="#a9c6e4" stroke="#0e5b96" stroke-width="1.500"/><path d="M9.500 6.300V14.700M5.300 10.500H13.700" stroke="#fff" stroke-width="3"/></svg>
<div class="btn" style="left:776px;top:205px;width:22px;border-color:#6e6a5c"></div>
<svg style="left:776px;top:205px" width="22" height="26" viewBox="0 0 22 26"><path d="M14.500 16L19 20.500" stroke="#555" stroke-width="3.600"/><circle cx="9.500" cy="10.500" r="7" fill="#a9c6e4" stroke="#0e5b96" stroke-width="1.500"/><path d="M5.300 10.500H13.700" stroke="#fff" stroke-width="3"/></svg>
<div class="btn" style="left:801px;top:205px;width:22px;border-color:#6e6a5c"></div>
<svg style="left:801px;top:205px" width="22" height="26" viewBox="0 0 22 26"><circle cx="12.500" cy="11" r="7.800" fill="#fdc51a"/><circle cx="12.500" cy="11" r="7.800" fill="none" stroke="#f7941d" stroke-width="1.500"/><path d="M1.500 21.500L5.500 19L9 10L11.500 14.500L9 21.500Z" fill="#a9cdea" stroke="#0e5b96" stroke-width="1.200"/><path d="M1 21.500H8" stroke="#0e5b96" stroke-width="1.800"/><path d="M10 21.500L12 17L13 18.500L15.500 12L17.500 18L18.500 16.500L20.500 21.500Z" fill="#79b81d" stroke="#3f8c34" stroke-width="1"/></svg>
<div style="left:514px;top:210px;width:1px;height:17px;background:#8f8f8f"></div>
<div style="left:617px;top:210px;width:1px;height:17px;background:#8f8f8f"></div>
<div style="left:670px;top:210px;width:1px;height:17px;background:#8f8f8f"></div>
<div style="left:723px;top:210px;width:1px;height:17px;background:#8f8f8f"></div>
<div class="btn" style="left:826px;top:205px;width:186px;border-color:#6e6a5c"><div class="t" style="left:5px;top:5px">Center on selected objects</div></div>
<!-- canvas -->
<div id="cv" style="left:414px;top:240px;width:645px;height:668px;background:#f6f9fd;overflow:hidden">
<svg style="left:0;top:0" width="645" height="668" viewBox="414 240 645 668" font-family="'Liberation Sans',sans-serif" fill="#000">
<path d="M589.5 315L589.5 411" fill="none" stroke="#000" stroke-width="1.1"/>
<path d="M859.5 312L859.5 364L589.5 411" fill="none" stroke="#000" stroke-width="1.1"/>
<path d="M589.5 481L589.5 490" fill="none" stroke="#000" stroke-width="1.1"/>
<path d="M589.5 490L434.5 537.5L434.5 701L589.5 748" fill="none" stroke="#000" stroke-width="1.1"/>
<path d="M589.5 490L859.5 537.5L859.5 701L589.5 748" fill="none" stroke="#000" stroke-width="1.1"/>
<path d="M589.5 490L589.5 586" fill="none" stroke="#000" stroke-width="1.1"/>
<path d="M589.5 652L589.5 836" fill="none" stroke="#000" stroke-width="1.1"/>
<path d="M586.3 414L589.5 419.5L592.7 414" fill="none" stroke="#000" stroke-width="1.1"/>
<path d="M585.3 578L589.5 586.5L593.7 578" fill="none" stroke="#000" stroke-width="1.1"/>
<path d="M585.3 759.5L589.5 767L593.7 759.5" fill="none" stroke="#000" stroke-width="1.1"/>
<path d="M585.3 827.5L589.5 835.5L593.7 827.5" fill="none" stroke="#000" stroke-width="1.1"/>
<circle cx="589.5" cy="411" r="3.6" fill="#000"/>
<circle cx="589.5" cy="490.3" r="3.6" fill="#000"/>
<circle cx="589.5" cy="748" r="3.6" fill="#000"/>
<path d="M566.8 269.8A12.33 12.33 0 0 1 566.8 291.2" fill="none" stroke="#000" stroke-width="4.4" stroke-linecap="butt"/>
<path d="M577.3 262A19.94 19.94 0 0 1 577.3 299" fill="none" stroke="#000" stroke-width="4.6" stroke-linecap="butt"/>
<path d="M587.6 252.3A30.5 30.5 0 0 1 587.6 308.8" fill="none" stroke="#000" stroke-width="5" stroke-linecap="butt"/>
<rect x="833.6" y="257.2" width="58" height="53" rx="1.5" fill="#7b96ab"/>
<rect x="830" y="253" width="56" height="51" rx="2.5" fill="#3399ff" stroke="#0b0b14" stroke-width="2"/>
<rect x="831.95" y="254.95" width="52.1" height="47.1" fill="none" stroke="#93d0ff" stroke-width="1.5"/>
<path d="M841 269A12.08 12.08 0 0 1 841 289" fill="none" stroke="#000" stroke-width="4.1" stroke-linecap="butt"/>
<path d="M852.5 264A19.37 19.37 0 0 1 852.5 294.3" fill="none" stroke="#000" stroke-width="4.2" stroke-linecap="butt"/>
<path d="M864.5 260.5A27.82 27.82 0 0 1 864.5 298.5" fill="none" stroke="#000" stroke-width="4.2" stroke-linecap="butt"/>
<rect x="562.6" y="426.2" width="58" height="52.5" rx="1.5" fill="#7b96ab"/>
<rect x="559" y="422" width="56" height="50.5" rx="2.5" fill="#3399ff" stroke="#0b0b14" stroke-width="2"/>
<rect x="560.95" y="423.95" width="52.1" height="46.6" fill="none" stroke="#93d0ff" stroke-width="1.5"/>
<path d="M578.7 430.2L596 447L578.7 464Z" fill="#000"/>
<rect x="560.6" y="593.2" width="61" height="55.5" rx="1.5" fill="#7b96ab"/>
<rect x="557" y="589" width="59" height="53.5" rx="2.5" fill="#3399ff" stroke="#0b0b14" stroke-width="2"/>
<rect x="558.95" y="590.95" width="55.1" height="49.6" fill="none" stroke="#93d0ff" stroke-width="1.5"/>
<path d="M578.3 598L596.3 616L578.3 634Z" fill="#000"/>
<rect x="562.6" y="843.2" width="57" height="52" rx="1.5" fill="#7b96ab"/>
<rect x="559" y="839" width="55" height="50" rx="2.5" fill="#3399ff" stroke="#0b0b14" stroke-width="2"/>
<rect x="560.95" y="840.95" width="51.1" height="46.1" fill="none" stroke="#93d0ff" stroke-width="1.5"/>
<path d="M570 854.5A12.08 12.08 0 0 1 570 874.5" fill="none" stroke="#000" stroke-width="4.1" stroke-linecap="butt"/>
<path d="M581.5 849.5A19.37 19.37 0 0 1 581.5 879.8" fill="none" stroke="#000" stroke-width="4.2" stroke-linecap="butt"/>
<path d="M593.5 846A27.82 27.82 0 0 1 593.5 884" fill="none" stroke="#000" stroke-width="4.2" stroke-linecap="butt"/>
<text x="637" y="261.8" font-size="14.67" text-anchor="start">Release</text>
<text x="637" y="278.25" font-size="14.67" text-anchor="start">Step for</text>
<text x="637" y="294.7" font-size="14.67" text-anchor="start">Purchase</text>
<text x="637" y="311.15" font-size="14.67" text-anchor="start">Order Created</text>
<text x="907" y="277.5" font-size="14.67" text-anchor="start">Workflow</text>
<text x="907" y="293.7" font-size="14.67" text-anchor="start">started</text>
<text x="637" y="437.5" font-size="14.67" text-anchor="start">Release of</text>
<text x="637" y="453.9" font-size="14.67" text-anchor="start">purchase</text>
<text x="637" y="470.3" font-size="14.67" text-anchor="start">order</text>
<text x="637" y="598.3" font-size="14.67" text-anchor="start">Release of</text>
<text x="637" y="614.9" font-size="14.67" text-anchor="start">purchase</text>
<text x="637" y="631.5" font-size="14.67" text-anchor="start">order</text>
<text x="637" y="648.1" font-size="14.67" text-anchor="start">effected</text>
<text x="637" y="862.5" font-size="14.67" text-anchor="start">Workflow</text>
<text x="637" y="879" font-size="14.67" text-anchor="start">completed</text>
<text x="434.5" y="556" font-size="9.75" text-anchor="middle">Release</text>
<text x="434.5" y="566.3" font-size="9.75" text-anchor="middle">of</text>
<text x="569" y="561.8" font-size="9.75" text-anchor="start">Purchase order released</text>
<text x="839.5" y="562" font-size="9.75" text-anchor="start">Purchase order changed significantly</text>
<text x="569" y="684.8" font-size="9.75" text-anchor="start">Confirmation sent</text>
</svg></div>
<!-- overview -->
<div id="ov" style="left:1078px;top:240px;width:357px;height:687px;background:#d3e1f0;overflow:hidden">
<svg style="left:0;top:0" width="357" height="687" viewBox="1078 240 357 687" font-family="'Liberation Sans',sans-serif" fill="#000">
<path d="M1187.99 286.52L1187.99 346.58" fill="none" stroke="#000" stroke-width="1.2"/>
<path d="M1356.9 284.64L1356.9 317.17L1187.99 346.58" fill="none" stroke="#000" stroke-width="1.2"/>
<path d="M1187.99 390.37L1187.99 396" fill="none" stroke="#000" stroke-width="1.2"/>
<path d="M1187.99 396L1091.02 425.72L1091.02 528L1187.99 557.4" fill="none" stroke="#000" stroke-width="1.2"/>
<path d="M1187.99 396L1356.9 425.72L1356.9 528L1187.99 557.4" fill="none" stroke="#000" stroke-width="1.2"/>
<path d="M1187.99 396L1187.99 456.06" fill="none" stroke="#000" stroke-width="1.2"/>
<path d="M1187.99 497.35L1187.99 612.46" fill="none" stroke="#000" stroke-width="1.2"/>
<path d="M1185.99 348.45L1187.99 351.9L1189.99 348.45" fill="none" stroke="#000" stroke-width="1.2"/>
<path d="M1185.37 451.05L1187.99 456.37L1190.62 451.05" fill="none" stroke="#000" stroke-width="1.2"/>
<path d="M1185.37 564.6L1187.99 569.29L1190.62 564.6" fill="none" stroke="#000" stroke-width="1.2"/>
<path d="M1185.37 607.14L1187.99 612.14L1190.62 607.14" fill="none" stroke="#000" stroke-width="1.2"/>
<circle cx="1187.99" cy="346.58" r="2.25" fill="#000"/>
<circle cx="1187.99" cy="396.19" r="2.25" fill="#000"/>
<circle cx="1187.99" cy="557.4" r="2.25" fill="#000"/>
<path d="M1173.79 258.24A7.72 7.72 0 0 1 1173.79 271.63" fill="none" stroke="#000" stroke-width="2.75" stroke-linecap="butt"/>
<path d="M1180.36 253.36A12.47 12.47 0 0 1 1180.36 276.51" fill="none" stroke="#000" stroke-width="2.88" stroke-linecap="butt"/>
<path d="M1186.8 247.29A19.08 19.08 0 0 1 1186.8 282.64" fill="none" stroke="#000" stroke-width="3.13" stroke-linecap="butt"/>
<rect x="1340.7" y="250.36" width="36.28" height="33.16" rx="1.5" fill="#7b96ab"/>
<rect x="1338.47" y="247.76" width="34.98" height="31.86" rx="1.75" fill="#3399ff" stroke="#0b0b14" stroke-width="1.3"/>
<rect x="1339.77" y="249.06" width="32.38" height="29.26" fill="none" stroke="#93d0ff" stroke-width="0.9"/>
<path d="M1345.33 257.74A7.56 7.56 0 0 1 1345.33 270.25" fill="none" stroke="#000" stroke-width="2.56" stroke-linecap="butt"/>
<path d="M1352.53 254.61A12.12 12.12 0 0 1 1352.53 273.57" fill="none" stroke="#000" stroke-width="2.63" stroke-linecap="butt"/>
<path d="M1360.03 252.42A17.4 17.4 0 0 1 1360.03 276.2" fill="none" stroke="#000" stroke-width="2.63" stroke-linecap="butt"/>
<rect x="1171.16" y="356.09" width="36.28" height="32.84" rx="1.5" fill="#7b96ab"/>
<rect x="1168.94" y="353.48" width="34.98" height="31.54" rx="1.75" fill="#3399ff" stroke="#0b0b14" stroke-width="1.3"/>
<rect x="1170.24" y="354.78" width="32.38" height="28.94" fill="none" stroke="#93d0ff" stroke-width="0.9"/>
<path d="M1181.24 358.59L1192.06 369.1L1181.24 379.73Z" fill="#000"/>
<rect x="1169.91" y="460.56" width="38.16" height="34.72" rx="1.5" fill="#7b96ab"/>
<rect x="1167.69" y="457.96" width="36.86" height="33.42" rx="1.75" fill="#3399ff" stroke="#0b0b14" stroke-width="1.3"/>
<rect x="1168.99" y="459.26" width="34.26" height="30.82" fill="none" stroke="#93d0ff" stroke-width="0.9"/>
<path d="M1180.99 463.56L1192.25 474.83L1180.99 486.09Z" fill="#000"/>
<rect x="1171.16" y="616.96" width="35.66" height="32.53" rx="1.5" fill="#7b96ab"/>
<rect x="1168.94" y="614.36" width="34.36" height="31.23" rx="1.75" fill="#3399ff" stroke="#0b0b14" stroke-width="1.3"/>
<rect x="1170.24" y="615.66" width="31.76" height="28.63" fill="none" stroke="#93d0ff" stroke-width="0.9"/>
<path d="M1175.79 624.03A7.56 7.56 0 0 1 1175.79 636.54" fill="none" stroke="#000" stroke-width="2.56" stroke-linecap="butt"/>
<path d="M1182.99 620.9A12.12 12.12 0 0 1 1182.99 639.86" fill="none" stroke="#000" stroke-width="2.63" stroke-linecap="butt"/>
<path d="M1190.5 618.71A17.4 17.4 0 0 1 1190.5 642.49" fill="none" stroke="#000" stroke-width="2.63" stroke-linecap="butt"/>
<text x="1217.71" y="253.04" font-size="9.2" text-anchor="start" stroke="#000" stroke-width="0.25">Release</text>
<text x="1217.71" y="263.33" font-size="9.2" text-anchor="start" stroke="#000" stroke-width="0.25">Step for</text>
<text x="1217.71" y="273.62" font-size="9.2" text-anchor="start" stroke="#000" stroke-width="0.25">Purchase</text>
<text x="1217.71" y="283.91" font-size="9.2" text-anchor="start" stroke="#000" stroke-width="0.25">Order Created</text>
<text x="1386.62" y="262.86" font-size="9.2" text-anchor="start" stroke="#000" stroke-width="0.25">Workflow</text>
<text x="1386.62" y="272.99" font-size="9.2" text-anchor="start" stroke="#000" stroke-width="0.25">started</text>
<text x="1217.71" y="362.96" font-size="9.2" text-anchor="start" stroke="#000" stroke-width="0.25">Release of</text>
<text x="1217.71" y="373.22" font-size="9.2" text-anchor="start" stroke="#000" stroke-width="0.25">purchase</text>
<text x="1217.71" y="383.48" font-size="9.2" text-anchor="start" stroke="#000" stroke-width="0.25">order</text>
<text x="1217.71" y="463.55" font-size="9.2" text-anchor="start" stroke="#000" stroke-width="0.25">Release of</text>
<text x="1217.71" y="473.94" font-size="9.2" text-anchor="start" stroke="#000" stroke-width="0.25">purchase</text>
<text x="1217.71" y="484.32" font-size="9.2" text-anchor="start" stroke="#000" stroke-width="0.25">order</text>
<text x="1217.71" y="494.71" font-size="9.2" text-anchor="start" stroke="#000" stroke-width="0.25">effected</text>
<text x="1217.71" y="628.84" font-size="9.2" text-anchor="start" stroke="#000" stroke-width="0.25">Workflow</text>
<text x="1217.71" y="639.16" font-size="9.2" text-anchor="start" stroke="#000" stroke-width="0.25">completed</text>
<text x="1091.02" y="437.09" font-size="5.65" text-anchor="middle" stroke="#000" stroke-width="0.25">Release</text>
<text x="1091.02" y="443.53" font-size="5.65" text-anchor="middle" stroke="#000" stroke-width="0.25">of</text>
<text x="1175.17" y="440.72" font-size="5.65" text-anchor="start" stroke="#000" stroke-width="0.25">Purchase order released</text>
<text x="1344.39" y="440.84" font-size="5.65" text-anchor="start" stroke="#000" stroke-width="0.25">Purchase order changed significantly</text>
<text x="1175.17" y="517.67" font-size="5.65" text-anchor="start" stroke="#000" stroke-width="0.25">Confirmation sent</text>
<path d="M1079.5 656.500V241.5H1436" fill="none" stroke="#00f000" stroke-width="1.2"/><path d="M1079 656.500H1436" stroke="#00f000" stroke-width="1.2"/>
</svg></div>
<!-- canvas scrollbars -->
<div style="left:1059px;top:240px;width:19px;height:687px;background:#ebf1f8"></div>
<div style="left:414px;top:908px;width:645px;height:19px;background:#ebf1f8"></div>
<div style="left:1060px;top:242px;width:17px;height:19px;background:#f7f9fc"></div>
<div style="left:1060px;top:263px;width:17px;height:19px;background:#f7f9fc"></div>
<svg style="left:1063px;top:248px" width="12" height="6" viewBox="0 0 12 6"><path d="M0 5.500H11V4.300H9.500L5.500 0L1.500 4.300H0Z" fill="#44556a"/></svg>
<svg style="left:1063px;top:269px" width="12" height="6" viewBox="0 0 12 6"><path d="M0 0H11V1.200H9.500L5.500 5.500L1.500 1.200H0Z" fill="#44556a"/></svg>
<div style="left:1060px;top:283px;width:17px;height:578px;border:1px solid #a9b4c2;border-radius:2px;background:linear-gradient(90deg,#e4ebf3,#edf2f8 40%,#dfe7f0)"></div>
<svg style="left:1065px;top:569px" width="6" height="8" viewBox="0 0 6 8"><path d="M0 0h2v2h-2zM3.500 0h2v2h-2zM0 3h2v2h-2zM3.500 3h2v2h-2zM0 6h2v2h-2zM3.500 6h2v2h-2z" fill="#b4bfcc"/></svg>
<div style="left:1060px;top:866px;width:17px;height:19px;background:#f7f9fc"></div>
<div style="left:1060px;top:887px;width:17px;height:19px;background:#f7f9fc"></div>
<svg style="left:1063px;top:873px" width="12" height="6" viewBox="0 0 12 6"><path d="M0 5.500H11V4.300H9.500L5.500 0L1.500 4.300H0Z" fill="#44556a"/></svg>
<svg style="left:1063px;top:894px" width="12" height="6" viewBox="0 0 12 6"><path d="M0 0H11V1.200H9.500L5.500 5.500L1.500 1.200H0Z" fill="#44556a"/></svg>
<!-- horizontal -->
<div style="left:415px;top:909px;width:19px;height:17px;background:#f7f9fc"></div>
<div style="left:436px;top:909px;width:19px;height:17px;background:#f7f9fc"></div>
<svg style="left:421px;top:912px" width="6" height="11" viewBox="0 0 6 11"><path d="M5.500 0V10.500H4.300V9L0 5.250L4.300 1.500V0Z" fill="#44556a"/></svg>
<svg style="left:442px;top:912px" width="6" height="11" viewBox="0 0 6 11"><path d="M0 0V10.500H1.200V9L5.500 5.250L1.200 1.500V0Z" fill="#44556a"/></svg>
<div style="left:458px;top:908px;width:556px;height:18px;border:1px solid #a9b4c2;border-radius:2px;background:linear-gradient(#e9eff6,#e6edf5 50%,#d6e0ec)"></div>
<svg style="left:783px;top:914px" width="8" height="6" viewBox="0 0 8 6"><path d="M0 0h2v2h-2zM3 0h2v2h-2zM6 0h2v2h-2zM0 3.500h2v2h-2zM3 3.500h2v2h-2zM6 3.500h2v2h-2z" fill="#b4bfcc"/></svg>
<div style="left:1018px;top:909px;width:19px;height:17px;background:#f7f9fc"></div>
<div style="left:1039px;top:909px;width:19px;height:17px;background:#f7f9fc"></div>
<svg style="left:1024px;top:912px" width="6" height="11" viewBox="0 0 6 11"><path d="M5.500 0V10.500H4.300V9L0 5.250L4.300 1.500V0Z" fill="#44556a"/></svg>
<svg style="left:1045px;top:912px" width="6" height="11" viewBox="0 0 6 11"><path d="M0 0V10.500H1.200V9L5.500 5.250L1.200 1.500V0Z" fill="#44556a"/></svg>
<!-- splitters -->
<svg style="left:407px;top:538px" width="6" height="39" viewBox="0 0 6 39"><path d="M1 1h4v4h-4zM1 9h4v4h-4zM1 17h4v4h-4zM1 25h4v4h-4zM1 33h4v4h-4z" fill="#f4f7fb"/><path d="M0 0h4v4h-4zM0 8h4v4h-4zM0 16h4v4h-4zM0 24h4v4h-4zM0 32h4v4h-4z" fill="#8593a7"/></svg>
<svg style="left:750px;top:928px" width="38" height="6" viewBox="0 0 38 6"><path d="M1 1h4v4h-4zM9 1h4v4h-4zM17 1h4v4h-4zM25 1h4v4h-4zM33 1h4v4h-4z" fill="#f4f7fb"/><path d="M0 0h4v4h-4zM8 0h4v4h-4zM16 0h4v4h-4zM24 0h4v4h-4zM32 0h4v4h-4z" fill="#8593a7"/></svg>
<!-- window controls -->
<svg style="left:1300px;top:1px" width="134" height="42" viewBox="0 0 134 42">
<defs><linearGradient id="wcg" x1="0" y1="0" x2="0" y2="1"><stop offset="0" stop-color="#93a6d4"/><stop offset="1" stop-color="#7e90bf"/></linearGradient><filter id="wcs" x="-10%" y="-10%" width="120%" height="150%"><feGaussianBlur stdDeviation="2"/></filter></defs>
<path d="M16 0H133L104 27Q101 29.500 96 29.500H21Q16 29.500 16 25Z" fill="#5a6478" opacity="0.450" filter="url(#wcs)" transform="translate(0,2.500)"/>
<path d="M16 0H133.500L105 26.500Q102 29 97 29H20.500Q16 29 16 24.500Z" fill="url(#wcg)"/>
<g fill="#8a9ccb" stroke="#7686b4" stroke-width="1"><rect x="38.500" y="1.500" width="19" height="19" rx="1.500"/><rect x="61.500" y="1.500" width="19" height="19" rx="1.500"/><rect x="84.500" y="1.500" width="19" height="19" rx="1.500"/></g>
<rect x="42" y="14.500" width="12" height="2.300" fill="#c9d7f7"/>
<path d="M65.500 9.500H74.500V17H65.500ZM68.500 9V6H77.500V13.500H75" fill="none" stroke="#c9d7f7" stroke-width="1.500"/>
<path d="M89.500 6.500L98.500 15.500M98.500 6.500L89.500 15.500" stroke="#c9d7f7" stroke-width="3.200"/>
</svg>
<div id="frame"></div>
</div>
</body>
</html>
